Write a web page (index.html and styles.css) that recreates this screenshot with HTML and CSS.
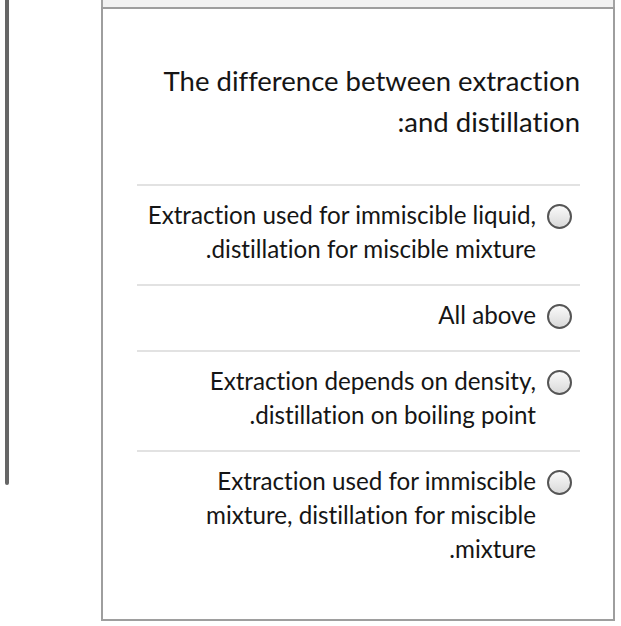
FILE: index.html
```html
<!DOCTYPE html>
<html lang="en">
<head>
<meta charset="utf-8">
<title>Question</title>
<link rel="stylesheet" href="styles.css">
</head>
<body>
<div class="page">
  <div class="scrollbar"></div>
  <div class="column">
    <div class="prev-card"></div>
    <div class="card">
      <h1 class="question" dir="rtl">The difference between extraction and distillation:</h1>
      <ul class="options">
        <li class="option">
          <span class="option-text" dir="rtl">Extraction used for immiscible liquid, distillation for miscible mixture.</span>
          <span class="radio"></span>
        </li>
        <li class="option">
          <span class="option-text" dir="rtl">All above</span>
          <span class="radio"></span>
        </li>
        <li class="option">
          <span class="option-text" dir="rtl">Extraction depends on density, distillation on boiling point.</span>
          <span class="radio"></span>
        </li>
        <li class="option">
          <span class="option-text" dir="rtl">Extraction used for immiscible mixture, distillation for miscible mixture.</span>
          <span class="radio"></span>
        </li>
      </ul>
    </div>
  </div>
</div>
</body>
</html>
```

FILE: styles.css
```css
html, body {
  margin: 0;
  padding: 0;
  background: #ffffff;
}

body {
  font-family: Lato, "Liberation Sans", sans-serif;
  color: #151515;
  font-variant-ligatures: none;
}

.page {
  display: flex;
  align-items: flex-start;
  padding-left: 5px;
}

.scrollbar {
  width: 4px;
  height: 485px;
  background: #666666;
  border-radius: 0 0 2px 2px;
  flex: none;
}

.column {
  margin-left: 92px;
  width: 514px;
  display: flex;
  flex-direction: column;
}

.prev-card {
  height: 7px;
  background: #f2f2f2;
  border-left: 2px solid #a3a3a3;
  border-right: 2px solid #a3a3a3;
  box-sizing: border-box;
}

.card {
  border: 2px solid #9e9e9e;
  height: 614px;
  box-sizing: border-box;
  padding: 51px 33px 0 34px;
}

.question {
  margin: 0;
  font-size: 27.5px;
  font-weight: 400;
  line-height: 41px;
  text-align: right;
  padding-bottom: 42px;
  border-bottom: 2px solid #e2e2e2;
}

.options {
  list-style: none;
  margin: 0;
  padding: 0;
}

.option {
  display: flex;
  align-items: flex-start;
  gap: 11px;
  padding: 12px 8px 18px 0;
  border-bottom: 2px solid #e2e2e2;
  font-size: 24.2px;
  line-height: 34px;
}

.option:last-child {
  border-bottom: none;
}

.option-text {
  flex: 1;
  text-align: right;
}

.radio {
  flex: none;
  width: 25px;
  height: 25px;
  margin-top: 6px;
  box-sizing: border-box;
  border: 2px solid #555555;
  border-radius: 50%;
  background: linear-gradient(#fafafa, #d9d9d9);
}
```
